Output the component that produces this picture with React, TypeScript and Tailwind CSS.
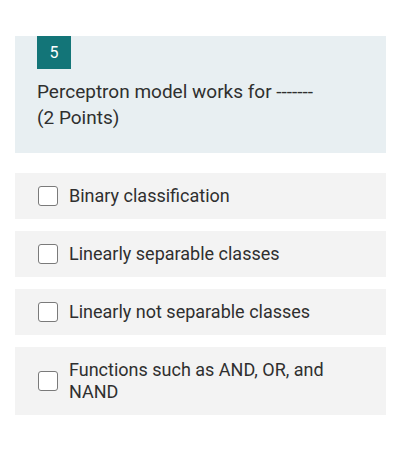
const OPCOES = [
  'Binary classification',
  'Linearly separable classes',
  'Linearly not separable classes',
  'Functions such as AND, OR, and NAND',
];

export default function App() {
  return (
    <div
      className="min-h-[460px] bg-white px-[15px] pt-[36px] text-[#2f2f2f]"
      style={{ fontFamily: 'Roboto, "Liberation Sans", sans-serif' }}
    >
      <div className="w-[371px] bg-[#e8eff2] pb-[22px] pl-[22px] pr-[22px]">
        <div className="flex h-[33px] w-[34px] items-center justify-center bg-[#137578] text-[16px] text-white">
          5
        </div>
        <p className="mt-[10px] text-[19px] leading-[26px]">
          Perceptron model works for -------
          <br />
          (2 Points)
        </p>
      </div>

      <ul className="mt-[20px] flex w-[371px] flex-col gap-[12px]">
        {OPCOES.map((opcao) => (
          <li
            key={opcao}
            className="flex items-center gap-[11px] bg-[#f3f3f3] py-3 pl-[23px] pr-[22px]"
          >
            <span className="h-[20px] w-[20px] shrink-0 rounded-[3px] border-[1.5px] border-[#7a7a7a] bg-white" />
            <span className="text-[18px] leading-[22px]">{opcao}</span>
          </li>
        ))}
      </ul>
    </div>
  );
}
